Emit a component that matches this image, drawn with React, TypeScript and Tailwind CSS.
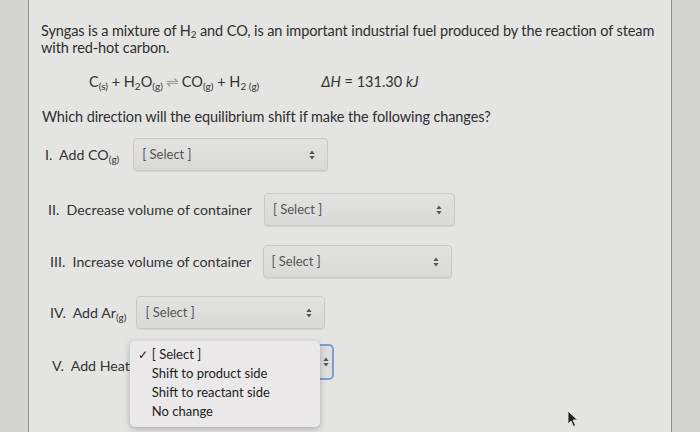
import React from 'react';

const font = { fontFamily: 'Lato, "Open Sans", sans-serif' };

function Arrows() {
  return (
    <svg width="6" height="10" viewBox="0 0 6 10" className="shrink-0">
      <path d="M3 0.5 L5.6 4 L0.4 4 Z" fill="#555" />
      <path d="M3 9.5 L5.6 6 L0.4 6 Z" fill="#555" />
    </svg>
  );
}

function SelectBox({ width }: { width: string }) {
  return (
    <div
      className={`${width} h-[33px] shrink-0 flex items-center justify-between pl-2 pr-3 rounded-[4px] border border-[#c9c9c7] bg-gradient-to-b from-[#e2e2e0] to-[#d9d9d7] shadow-[0_1px_1px_rgba(0,0,0,0.08)]`}
    >
      <span className="text-[13px] text-[#555]">[ Select ]</span>
      <Arrows />
    </div>
  );
}

// chemistry subscripts, kept off the line box so rows keep their height
function Sub({ children }: { children: React.ReactNode }) {
  return <span className="text-[10px] leading-none relative top-[3px]">{children}</span>;
}

export default function App() {
  return (
    <div className="w-[700px] h-[432px] overflow-hidden bg-[#d3d3d1] text-[#2e2e2e]" style={font}>
      <div className="ml-[28px] mr-[28px] h-full bg-[#e4e4e2] border-l border-r border-[#8f8f8d] pl-[12px] pt-[22px] relative">
        <p className="text-[14.5px] leading-[17px] w-[630px] tracking-[-0.1px]">
          Syngas is a mixture of H<span className="text-[10px] leading-none relative top-[2px]">2</span> and CO, is an important industrial fuel produced by the reaction of steam with red-hot carbon.
        </p>

        <div className="mt-[16px] h-[20px] ml-[48px] flex items-center text-[14.5px] text-[#333]">
          <span>
            C<Sub>(s)</Sub> + H<Sub>2</Sub>O<Sub>(g)</Sub>
            <span className="text-[#999] mx-[3px]">⇌</span>
            CO<Sub>(g)</Sub> + H<Sub>2 (g)</Sub>
          </span>
          <span className="ml-[62px]">
            <i>ΔH</i> = 131.30 <i>kJ</i>
          </span>
        </div>

        <p className="mt-[16px] h-[18px] leading-[18px] ml-[1px] text-[14.5px] tracking-[-0.1px]">
          Which direction will the equilibrium shift if make the following changes?
        </p>

        <div className="mt-[12px] ml-[4px] flex items-center gap-[14px] text-[14.2px] text-[#333]">
          <span>I.&nbsp; Add CO<Sub>(g)</Sub></span>
          <SelectBox width="w-[195px]" />
        </div>

        <div className="mt-[22px] ml-[7px] flex items-center gap-[12px] text-[14.2px] text-[#333]">
          <span>II.&nbsp; Decrease volume of container</span>
          <SelectBox width="w-[191px]" />
        </div>

        <div className="mt-[19px] ml-[9px] flex items-center gap-[11px] text-[14.2px] text-[#333]">
          <span>III.&nbsp; Increase volume of container</span>
          <SelectBox width="w-[189px]" />
        </div>

        <div className="mt-[18px] ml-[9px] flex items-center gap-[10px] text-[14.2px] text-[#333]">
          <span>IV.&nbsp; Add Ar<Sub>(g)</Sub></span>
          <SelectBox width="w-[189px]" />
        </div>

        <div className="mt-[15px] ml-[11px] flex items-start text-[14.2px] text-[#333]">
          <span className="mt-[11px]">V.&nbsp; Add Heat</span>
          <div className="relative ml-[2px]">
            <div className="w-[202px] h-[36px] flex items-center justify-end pr-[3px] rounded-[5px] border-2 border-[#7b9fd0] bg-[#dedede]">
              <Arrows />
            </div>
            <div className="absolute left-[-2px] top-[-3px] w-[190px] h-[86px] rounded-[5px] bg-[#eae8e8] shadow-[0_2px_6px_rgba(0,0,0,0.25)] pt-[4px] text-[13px] text-[#222]">
              <div className="flex items-center h-[19px]">
                <span className="w-[22px] text-right pr-[4px] text-[12px]">✓</span>
                <span>[ Select ]</span>
              </div>
              <div className="h-[19px] pl-[22px] flex items-center">Shift to product side</div>
              <div className="h-[19px] pl-[22px] flex items-center">Shift to reactant side</div>
              <div className="h-[19px] pl-[22px] flex items-center">No change</div>
            </div>
          </div>
        </div>

        <svg width="12" height="18" viewBox="0 0 12 18" className="absolute left-[538px] top-[410px]">
          <path d="M1 1 L1 14 L4 11 L6.5 16.5 L8.5 15.5 L6 10 L10.5 10 Z" fill="#222" stroke="#eee" strokeWidth="0.8" />
        </svg>
      </div>
    </div>
  );
}
